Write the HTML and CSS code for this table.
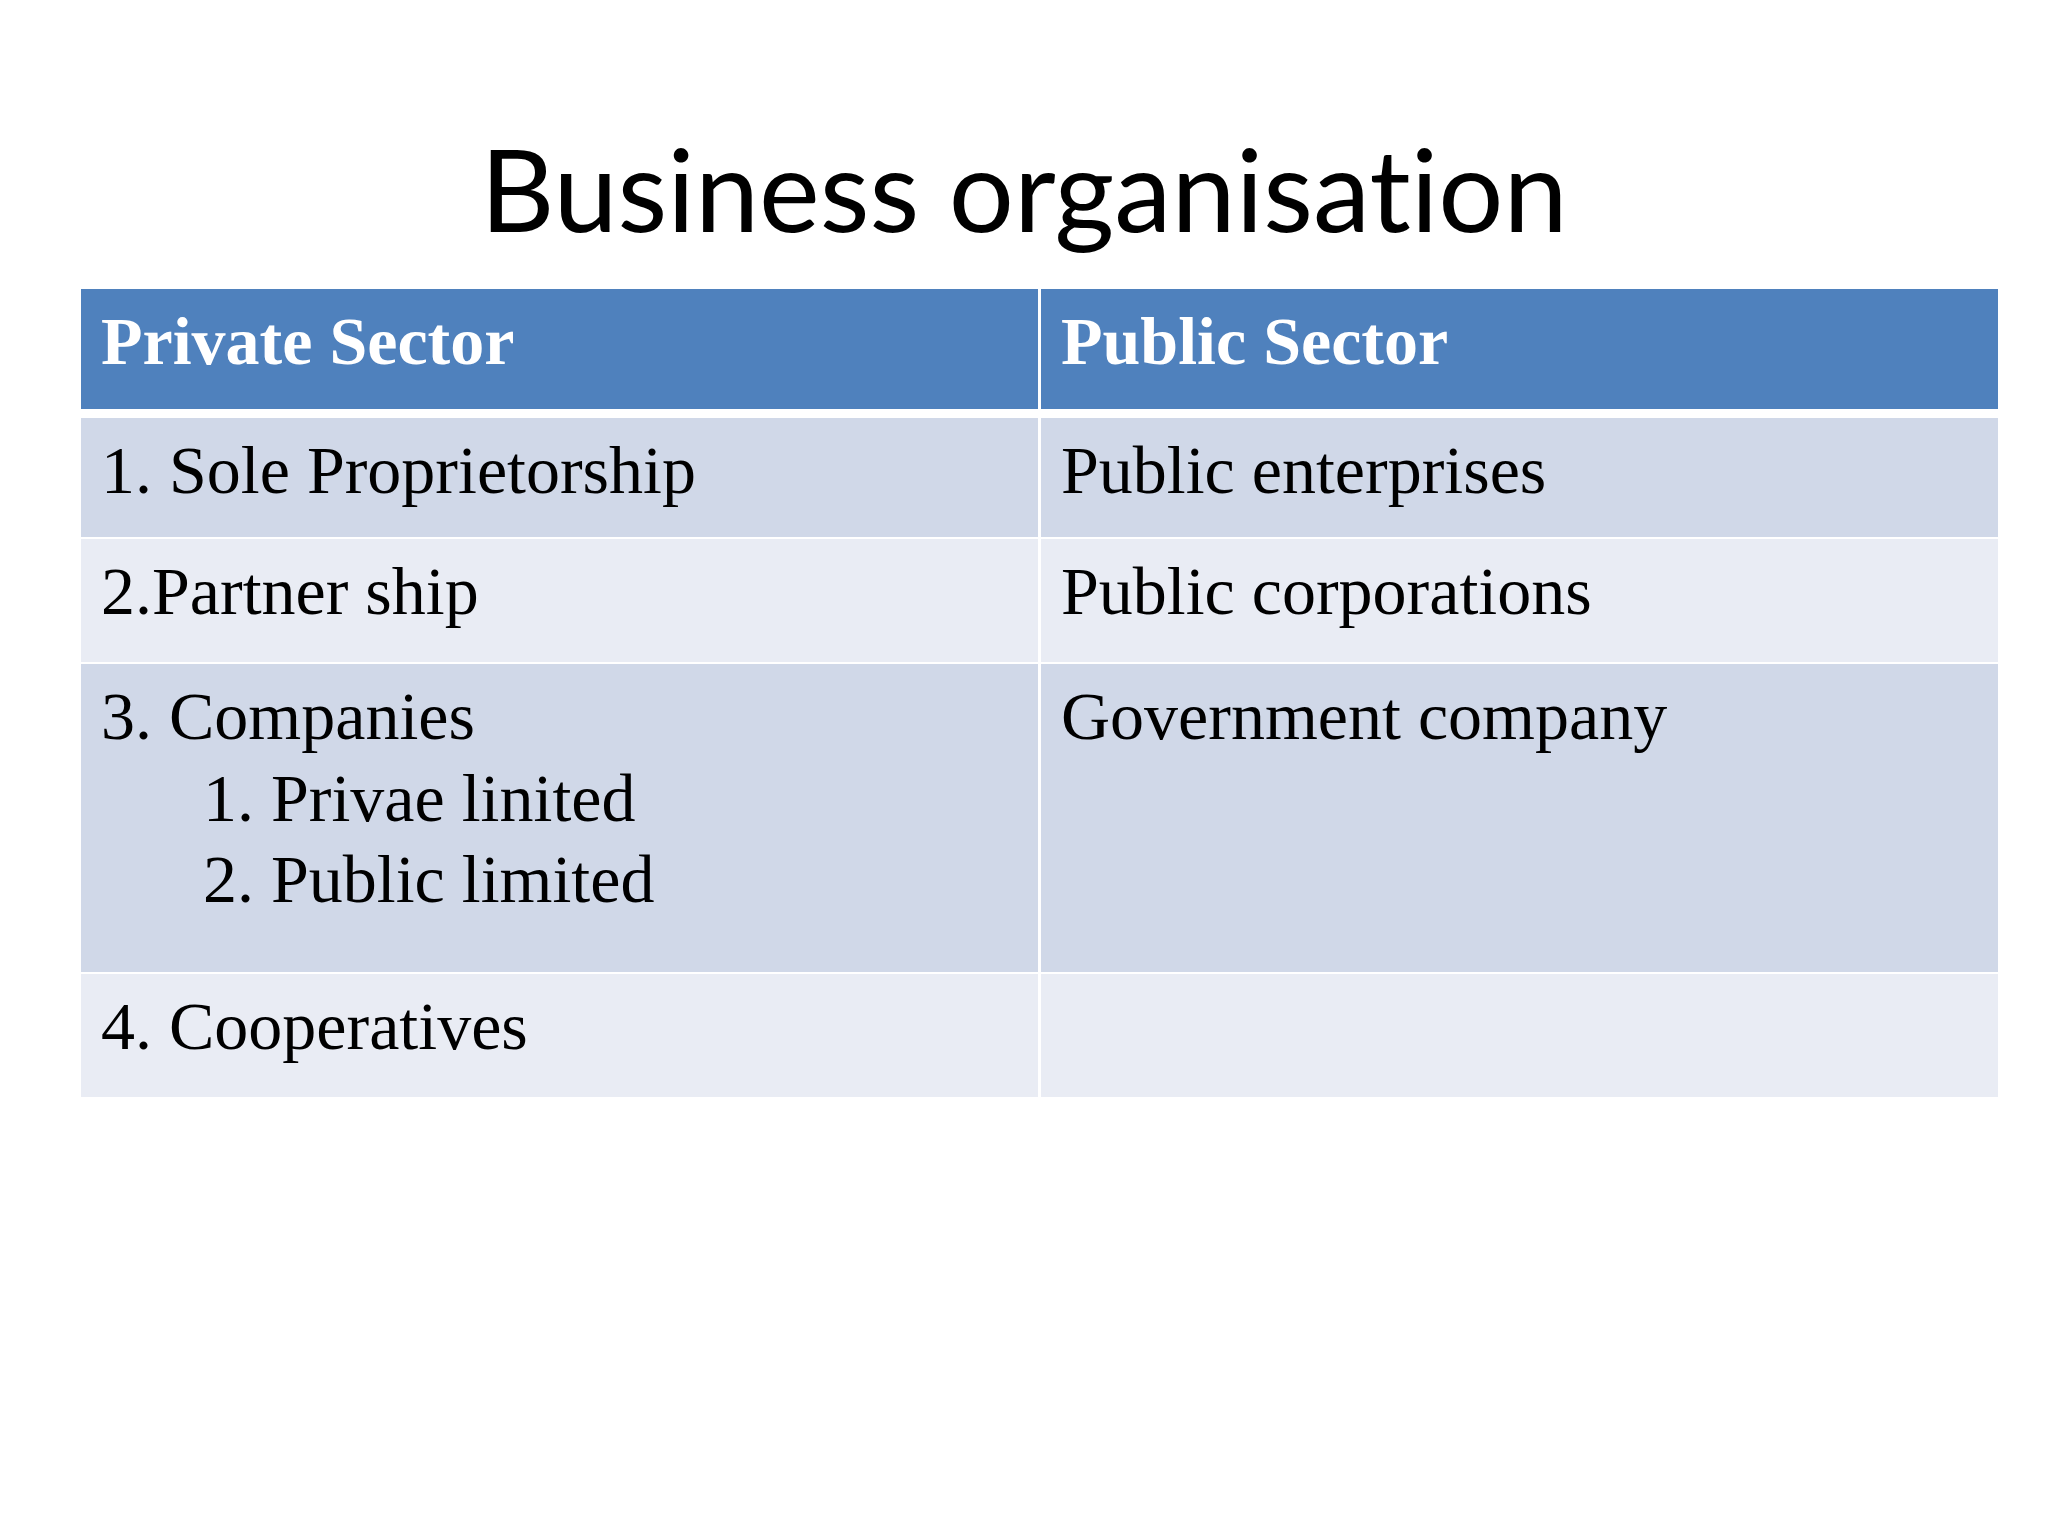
FILE: index.html
```html
<!DOCTYPE html>
<html lang="en">
<head>
<meta charset="utf-8">
<title>Business organisation</title>
<link rel="stylesheet" href="styles.css">
</head>
<body>
<main class="slide">
  <h1 class="title">Business organisation</h1>
  <div class="org-table">
    <div class="cell head">Private Sector</div>
    <div class="cell head">Public Sector</div>

    <div class="cell odd">1. Sole Proprietorship</div>
    <div class="cell odd">Public enterprises</div>

    <div class="cell even">2.Partner ship</div>
    <div class="cell even">Public corporations</div>

    <div class="cell odd">
      <div>3. Companies</div>
      <div class="sub">1. Privae linited</div>
      <div class="sub">2. Public limited</div>
    </div>
    <div class="cell odd">Government company</div>

    <div class="cell even">4. Cooperatives</div>
    <div class="cell even"></div>
  </div>
</main>
</body>
</html>
```

FILE: styles.css
```css
html, body {
  margin: 0;
  padding: 0;
  background: #ffffff;
}

.slide {
  width: 2048px;
  height: 1536px;
  box-sizing: border-box;
  padding: 125px 50px 0 81px;
  background: #ffffff;
}

.title {
  margin: 0 -50px 39px -81px;
  text-align: center;
  font-family: "Lato", "Open Sans", sans-serif;
  font-weight: 400;
  font-size: 115px;
  line-height: 125px;
  height: 125px;
  color: #000000;
  font-variant-ligatures: none;
  font-feature-settings: "liga" 0, "clig" 0;
}

.org-table {
  display: grid;
  grid-template-columns: 957px 957px;
  grid-template-rows: 127px 119px 123px 308px 123px;
  column-gap: 3px;
  row-gap: 2px;
  font-family: "Liberation Serif", "Times New Roman", serif;
  font-size: 68px;
  line-height: 1.2;
  color: #000000;
}

.cell {
  box-sizing: border-box;
  padding: 12px 20px 10px 20px;
  white-space: nowrap;
}

.head {
  background: #4f81bd;
  color: #ffffff;
  font-weight: 700;
  margin-bottom: 7px;
}

.odd {
  background: #d0d8e8;
}

.even {
  background: #e9ecf4;
}

.sub {
  padding-left: 102px;
}
```
